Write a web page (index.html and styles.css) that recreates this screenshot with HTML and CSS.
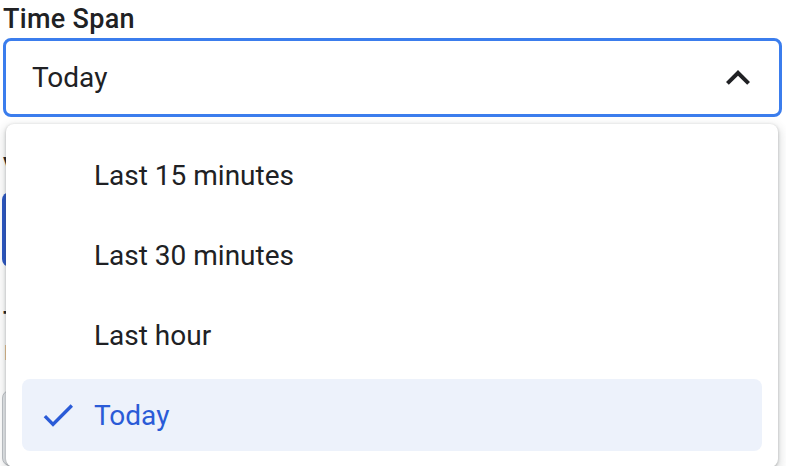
FILE: index.html
```html
<!DOCTYPE html>
<html>
<head>
<meta charset="utf-8">
<link rel="stylesheet" href="styles.css">
</head>
<body>
<div class="page">
  <div class="field">
    <div class="label">Time Span</div>
    <div class="select-wrap">
      <div class="select">
        <span class="select-value">Today</span>
        <svg class="chevron" width="48" height="48" viewBox="0 0 24 24"><path d="M12 8l-6 6 1.41 1.41L12 10.83l4.59 4.58L18 14z" fill="#202124"/></svg>
      </div>
      <div class="menu">
        <div class="item"><span class="slot"></span><span>Last 15 minutes</span></div>
        <div class="item"><span class="slot"></span><span>Last 30 minutes</span></div>
        <div class="item"><span class="slot"></span><span>Last hour</span></div>
        <div class="item selected"><span class="slot"><svg width="40" height="40" viewBox="0 0 24 24"><path d="M9 16.17L4.83 12l-1.42 1.41L9 19 21 7l-1.41-1.41z" fill="#2a5bd7"/></svg></span><span>Today</span></div>
      </div>
    </div>
  </div>
  <div class="field field-2">
    <div class="label">View</div>
    <div class="button"></div>
  </div>
  <div class="field field-3">
    <div class="label">Type</div>
    <div class="hint">Local</div>
    <div class="grey-box"></div>
  </div>
</div>
</body>
</html>
```

FILE: styles.css
```css
html, body {
  margin: 0;
  background: #ffffff;
}
body {
  font-family: Roboto, "Noto Sans", sans-serif;
  color: #202124;
  overflow: hidden;
}
.page {
  padding: 0 4px 0 3px;
}
.label {
  font-size: 27px;
  font-weight: 500;
  line-height: 32px;
  padding-top: 3px;
  margin-bottom: 3px;
  letter-spacing: 0.3px;
  color: #202124;
}
.select-wrap {
  position: relative;
}
.select {
  box-sizing: border-box;
  height: 79px;
  border: 3px solid #3b7ded;
  border-radius: 8px;
  padding: 0 17px 0 26px;
  display: flex;
  align-items: center;
  justify-content: space-between;
}
.select-value {
  font-size: 28px;
}
.chevron {
  display: block;
}
.menu {
  position: absolute;
  top: calc(100% + 7px);
  left: 3px;
  width: 772px;
  height: 343px;
  box-sizing: border-box;
  background: #ffffff;
  border-radius: 8px;
  box-shadow: 0 1px 3px rgba(60, 64, 67, 0.35), 0 4px 8px 3px rgba(60, 64, 67, 0.15);
  padding: 16px;
  display: flex;
  flex-direction: column;
  gap: 8px;
  z-index: 2;
}
.item {
  height: 72px;
  display: flex;
  align-items: center;
  gap: 16px;
  padding-left: 16px;
  border-radius: 8px;
  font-size: 28px;
  color: #202124;
}
.slot {
  width: 40px;
  height: 40px;
  display: flex;
}
.item.selected {
  background: #edf2fb;
  color: #2a5bd7;
}
.field-2 {
  margin-top: 35px;
}
.field-2 .label {
  padding-top: 0;
  margin-bottom: 8px;
}
.button {
  width: 320px;
  height: 75px;
  border-radius: 8px;
  background: #2a56c6;
  margin-left: -1px;
}
.field-3 {
  margin-top: 39px;
}
.field-3 .label {
  padding-top: 0;
  margin-bottom: 0;
}
.hint {
  font-size: 20px;
  line-height: 30px;
  color: #5f6368;
  padding-left: 1px;
}
.grey-box {
  width: 500px;
  margin-top: 22px;
  height: 76px;
  box-sizing: border-box;
  border: 1px solid #bdc1c6;
  background: #e8eaed;
  border-radius: 8px;
  margin-left: -1px;
}
```
